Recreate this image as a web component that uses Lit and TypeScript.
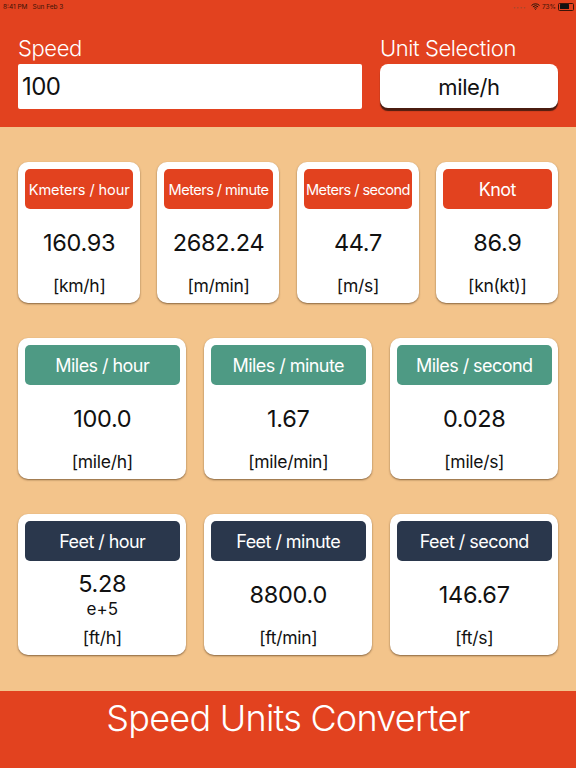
import { LitElement, html, css, svg } from "lit";
import { customElement } from "lit/decorators.js";

interface Unit { title: string; value: string; exp?: string; unit: string; fit?: string; }
const rows: { cls: string; cols: string; items: Unit[] }[] = [
  { cls: "red", cols: "four", items: [
    { title: "Kmeters / hour", value: "160.93", unit: "[km/h]", fit: "loose" },
    { title: "Meters / minute", value: "2682.24", unit: "[m/min]", fit: "tight" },
    { title: "Meters / second", value: "44.7", unit: "[m/s]", fit: "tight" },
    { title: "Knot", value: "86.9", unit: "[kn(kt)]", fit: "knot" },
  ]},
  { cls: "green", cols: "three", items: [
    { title: "Miles / hour", value: "100.0", unit: "[mile/h]" },
    { title: "Miles / minute", value: "1.67", unit: "[mile/min]" },
    { title: "Miles / second", value: "0.028", unit: "[mile/s]" },
  ]},
  { cls: "navy", cols: "three", items: [
    { title: "Feet / hour", value: "5.28", exp: "e+5", unit: "[ft/h]" },
    { title: "Feet / minute", value: "8800.0", unit: "[ft/min]" },
    { title: "Feet / second", value: "146.67", unit: "[ft/s]" },
  ]},
];

const wifi = svg`<svg class="wifi" viewBox="0 0 12 9" width="9" height="7" fill="none" stroke="#1d1208" stroke-width="1.3"><path d="M0.7 3.1a7.6 7.6 0 0 1 10.6 0"/><path d="M2.5 5a5 5 0 0 1 7 0"/><path d="M4.3 6.8a2.4 2.4 0 0 1 3.4 0"/><circle cx="6" cy="8.1" r="0.7" fill="#1d1208" stroke="none"/></svg>`;

@customElement("app-root")
export class AppRoot extends LitElement {
  static styles = css`
    :host { display: flex; flex-direction: column; width: 576px; height: 768px; background: #f3c48b;
      font-family: "Inter", "Liberation Sans", sans-serif; font-weight: 400; color: #111; overflow: hidden; }
    .header { height: 127px; box-sizing: border-box; background: #e2421f; display: flex; flex-direction: column; flex: none; }
    .status { height: 11px; padding: 0 2px 0 3px; margin-top: 1px; display: flex; align-items: center; font-size: 6.5px; color: #3a1408; }
    .status .time { margin-right: 5px; }
    .status .grow { flex: 1; }
    .dots { color: #a8492e; letter-spacing: 0.5px; margin-right: 5px; font-size: 5px; }
    .wifi { margin-right: 2px; }
    .batt { width: 13px; height: 5px; border: 0.5px solid #3a1408; border-radius: 1.5px; margin-left: 2px; padding: 0.5px; box-sizing: content-box; }
    .batt div { width: 70%; height: 100%; background: #111; border-radius: 0.5px; }
    .form { display: flex; gap: 18px; padding: 23px 18px 0; }
    .label { font-size: 22px; font-weight: 300; line-height: 26px; color: #fff; letter-spacing: -0.4px; height: 29px; }
    .speed { width: 344px; flex: none; }
    .unit { flex: 1; }
    .input { height: 45px; background: #fff; border-radius: 2px; display: flex; align-items: center; padding-left: 4px; font-size: 24px; letter-spacing: -0.6px; }
    .select { height: 44px; padding-top: 2px; box-sizing: border-box; background: #fff; border-radius: 8px; display: flex; align-items: center; justify-content: center; font-size: 22px; letter-spacing: -0.4px; box-shadow: 0 3px 1px #4a1c10; }
    .main { flex: 1; display: flex; flex-direction: column; gap: 35px; padding: 35px 18px 0; }
    .row { display: grid; }
    .row.four { grid-template-columns: repeat(4, 1fr); gap: 17.5px; }
    .row.three { grid-template-columns: repeat(3, 1fr); gap: 18px; }
    .card { height: 141px; box-sizing: border-box; background: #fff; border-radius: 10px; padding: 7px 6.5px 7px 7px; display: flex; flex-direction: column; align-items: stretch; box-shadow: 0 1px 2px rgba(90,60,30,.7); }
    .title { height: 40px; flex: none; padding-top: 1px; box-sizing: border-box; border-radius: 5px; display: flex; align-items: center; justify-content: center; color: #fff; font-size: 18px; letter-spacing: -0.55px; white-space: nowrap; }
    .four .title { font-size: 14.6px; }
    .four .title.loose { letter-spacing: -0.1px; }
    .four .title.tight { letter-spacing: -0.55px; }
    .four .title.knot { font-size: 18px; }
    .red .title { background: #e2421f; }
    .green .title { background: #4e9a84; }
    .navy .title { background: #2a374c; }
    .value { height: 66px; padding-top: 1px; box-sizing: border-box; flex: none; display: flex; flex-direction: column; align-items: center; justify-content: center; font-size: 23.5px; letter-spacing: -0.3px; line-height: 26px; }
    .exp { font-size: 17px; line-height: 20px; letter-spacing: 0; margin-top: 2px; }
    .has-exp { justify-content: flex-start; padding-top: 10px; }
    .u { text-align: center; font-size: 17.5px; line-height: 20px; letter-spacing: -0.3px; padding-top: 1px; }
    .footer { height: 77px; flex: none; background: #e2421f; color: #fff; display: flex; align-items: center; justify-content: center; font-size: 36px; font-weight: 300; letter-spacing: -0.75px; padding-bottom: 23px; box-sizing: border-box; }
  `;

  render() {
    return html`
      <div class="header">
        <div class="status">
          <span class="time">8:41 PM</span><span>Sun Feb 3</span><span class="grow"></span>
          <span class="dots">••••</span>${wifi}<span>73%</span><div class="batt"><div></div></div>
        </div>
        <div class="form">
          <div class="speed"><div class="label">Speed</div><div class="input">100</div></div>
          <div class="unit"><div class="label">Unit Selection</div><div class="select">mile/h</div></div>
        </div>
      </div>
      <div class="main">
        ${rows.map(r => html`
          <div class="row ${r.cols} ${r.cls}">
            ${r.items.map(i => html`
              <div class="card">
                <div class="title ${i.fit ?? ""}">${i.title}</div>
                <div class="value ${i.exp ? "has-exp" : ""}">${i.value}${i.exp ? html`<span class="exp">${i.exp}</span>` : ""}</div>
                <div class="u">${i.unit}</div>
              </div>`)}
          </div>`)}
      </div>
      <div class="footer">Speed Units Converter</div>
    `;
  }
}
